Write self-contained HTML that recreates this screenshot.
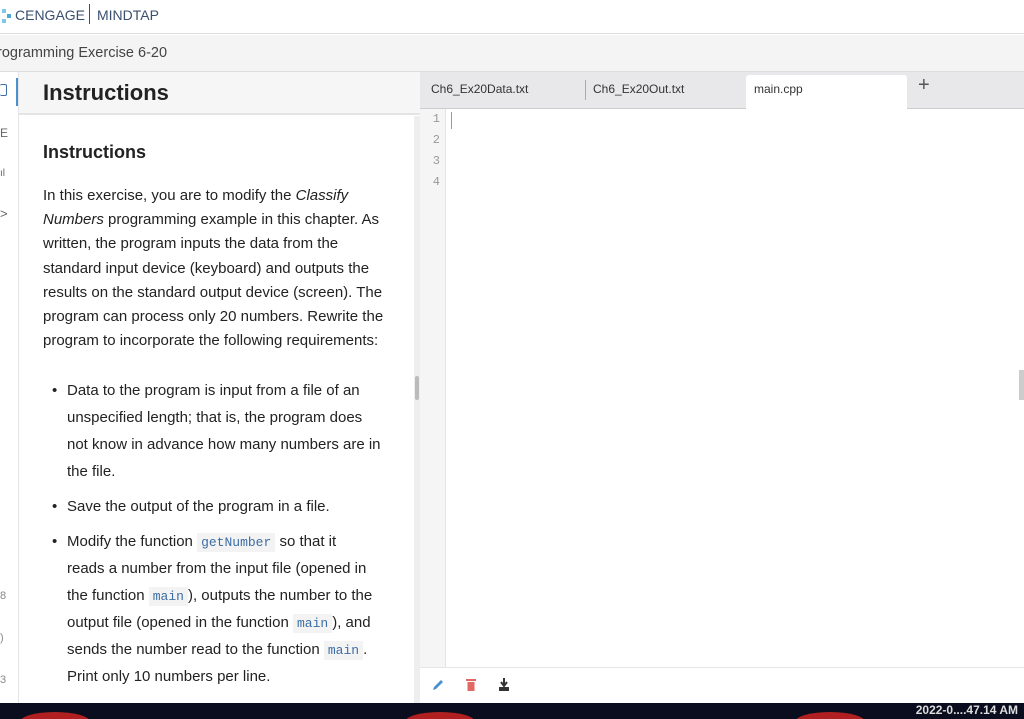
<!DOCTYPE html>
<html><head><meta charset="utf-8"><style>
*{margin:0;padding:0;box-sizing:border-box}
html,body{width:1024px;height:719px;overflow:hidden}
body{background:#fff;font-family:"Liberation Sans",sans-serif;color:#222;position:relative}
.abs{position:absolute}
.top{left:0;top:0;width:1024px;height:34px;background:#fff;border-bottom:1px solid #ddd}
.title{left:0;top:35px;width:1024px;height:37px;background:#f4f4f4;border-bottom:1px solid #ddd;font-size:14.5px;color:#444;line-height:36px}
.side{left:0;top:72px;width:19px;height:631px;background:#fff;border-right:1px solid #e5e5e5}
.ihead{left:19px;top:72px;width:401px;height:43px;background:#f6f6f6;border-bottom:2px solid #e4e4e4}
.ihead span{position:absolute;left:24px;top:8px;font-size:22px;font-weight:bold;color:#222}
.content{left:19px;top:116px;width:395px;height:587px;background:#fff;font-size:15px;color:#222}
.sb{left:414px;top:116px;width:6px;height:587px;background:#eee}
p.l{position:absolute;left:24px;white-space:nowrap}
code{font-family:"Liberation Mono",monospace;font-size:13px;color:#3c6ea5;background:#f3f3f3;padding:2px 4px}
.tabs{left:420px;top:72px;width:604px;height:37px;background:#e8e8ea;border-bottom:1px solid #ccc}
.tab{position:absolute;top:8px;font-size:12px;color:#333}
.code{left:420px;top:109px;width:604px;height:558px;background:#fff}
.gut{left:420px;top:109px;width:26px;height:558px;background:#f5f5f5;border-right:1px solid #e6e6e6;font-family:"Liberation Mono",monospace;font-size:12px;color:#999;text-align:right;padding-right:5px;line-height:21px}
.tb{left:420px;top:667px;width:604px;height:36px;background:#fff;border-top:1px solid #e6e6e6}
.bot{left:0;top:703px;width:1024px;height:16px;background:#0a0d1e;overflow:hidden}
</style></head><body>
<div class="abs top">
 <svg class="abs" style="left:0;top:6px" width="14" height="20"><rect x="2" y="3" width="4" height="4" fill="#7fc6e8"/><rect x="7" y="8" width="4" height="4" fill="#4aa9dc"/><rect x="2" y="13" width="4" height="4" fill="#7fc6e8"/></svg>
 <span class="abs" style="left:15px;top:7px;font-size:14px;color:#3a4f6e">CENGAGE</span>
 <div class="abs" style="left:89px;top:4px;width:1px;height:20px;background:#3a4f6e"></div>
 <span class="abs" style="left:97px;top:7px;font-size:14px;color:#3a4f6e">MINDTAP</span>
</div>
<div class="abs title"><span style="position:absolute;left:-3px;top:0">rogramming Exercise 6-20</span></div>
<div class="abs side">
 <div class="abs" style="left:0;top:12px;width:7px;height:12px;border:1.5px solid #3c6ea5;border-left:none;border-radius:2px"></div>
 <div class="abs" style="left:16px;top:6px;width:2px;height:28px;background:#4a8fd0"></div>
 <span class="abs" style="left:0;top:54px;font-size:12px;color:#666">E</span>
 <span class="abs" style="left:0;top:96px;font-size:10px;color:#666">ıl</span>
 <span class="abs" style="left:0;top:134px;font-size:13px;color:#666">&gt;</span>
 <span class="abs" style="left:0;top:518px;font-size:11px;color:#888">8</span>
 <span class="abs" style="left:0;top:560px;font-size:11px;color:#888">)</span>
 <span class="abs" style="left:0;top:602px;font-size:11px;color:#888">3</span>
</div>
<div class="abs ihead"><span>Instructions</span></div>
<div class="abs content">
 <p class="l" style="top:26px;font-size:18px;font-weight:bold">Instructions</p>
 <p class="l" style="top:71px">In this exercise, you are to modify the <i>Classify</i></p>
 <p class="l" style="top:95px"><i>Numbers</i> programming example in this chapter. As</p>
 <p class="l" style="top:119px">written, the program inputs the data from the</p>
 <p class="l" style="top:144px">standard input device (keyboard) and outputs the</p>
 <p class="l" style="top:168px">results on the standard output device (screen). The</p>
 <p class="l" style="top:192px">program can process only 20 numbers. Rewrite the</p>
 <p class="l" style="top:216px">program to incorporate the following requirements:</p>
 <p class="l" style="top:266px;left:33px">•</p>
 <p class="l" style="top:266px;left:48px">Data to the program is input from a file of an</p>
 <p class="l" style="top:293px;left:48px">unspecified length; that is, the program does</p>
 <p class="l" style="top:320px;left:48px">not know in advance how many numbers are in</p>
 <p class="l" style="top:347px;left:48px">the file.</p>
 <p class="l" style="top:382px;left:33px">•</p>
 <p class="l" style="top:382px;left:48px">Save the output of the program in a file.</p>
 <p class="l" style="top:417px;left:33px">•</p>
 <p class="l" style="top:417px;left:48px">Modify the function <code>getNumber</code> so that it</p>
 <p class="l" style="top:444px;left:48px">reads a number from the input file (opened in</p>
 <p class="l" style="top:471px;left:48px">the function <code>main</code>), outputs the number to the</p>
 <p class="l" style="top:498px;left:48px">output file (opened in the function <code>main</code>), and</p>
 <p class="l" style="top:525px;left:48px">sends the number read to the function <code>main</code>.</p>
 <p class="l" style="top:552px;left:48px">Print only 10 numbers per line.</p>
</div>
<div class="abs sb"><div class="abs" style="left:1px;top:260px;width:4px;height:24px;background:#bbb;border-radius:2px"></div></div>
<div class="abs tabs">
 <span class="tab" style="left:11px;top:10px">Ch6_Ex20Data.txt</span>
 <div class="abs" style="left:165px;top:8px;width:1px;height:20px;background:#aaa"></div>
 <span class="tab" style="left:173px;top:10px">Ch6_Ex20Out.txt</span>
 <div class="abs" style="left:326px;top:3px;width:161px;height:34px;background:#fff;border-radius:3px 3px 0 0"></div>
 <span class="tab" style="left:334px;top:10px">main.cpp</span>
 <span class="tab" style="left:498px;top:2px;font-size:20px;color:#555">+</span>
</div>
<div class="abs code"><div class="abs" style="left:31px;top:3px;width:1px;height:17px;background:#999"></div></div>
<div class="abs gut">1<br>2<br>3<br>4</div>
<div class="abs" style="left:1019px;top:370px;width:5px;height:30px;background:#ccc"></div>
<div class="abs tb">
 <svg class="abs" style="left:12px;top:11px" width="12" height="12"><path d="M1 11 L2 8 L9 1 L11 3 L4 10 Z" fill="#4a8fd0"/></svg>
 <svg class="abs" style="left:46px;top:10px" width="10" height="13"><rect x="0" y="1" width="10" height="2" fill="#e06a63"/><rect x="1.5" y="4" width="7" height="9" fill="#e06a63"/></svg>
 <svg class="abs" style="left:78px;top:10px" width="12" height="13"><path d="M6 0 V7 M3 4 L6 8 L9 4" stroke="#333" stroke-width="2" fill="none"/><rect x="1" y="9" width="10" height="4" fill="#333"/></svg>
</div>
<div class="abs bot">
 <div class="abs" style="left:20px;top:9px;width:70px;height:20px;border-radius:50%;background:#b02020"></div>
 <div class="abs" style="left:405px;top:9px;width:70px;height:20px;border-radius:50%;background:#b02020"></div>
 <div class="abs" style="left:795px;top:9px;width:70px;height:20px;border-radius:50%;background:#b02020"></div>
 <span class="abs" style="right:6px;top:0;font-size:12px;font-weight:bold;color:#ddd">2022-0....47.14 AM</span>
</div>
</body></html>
